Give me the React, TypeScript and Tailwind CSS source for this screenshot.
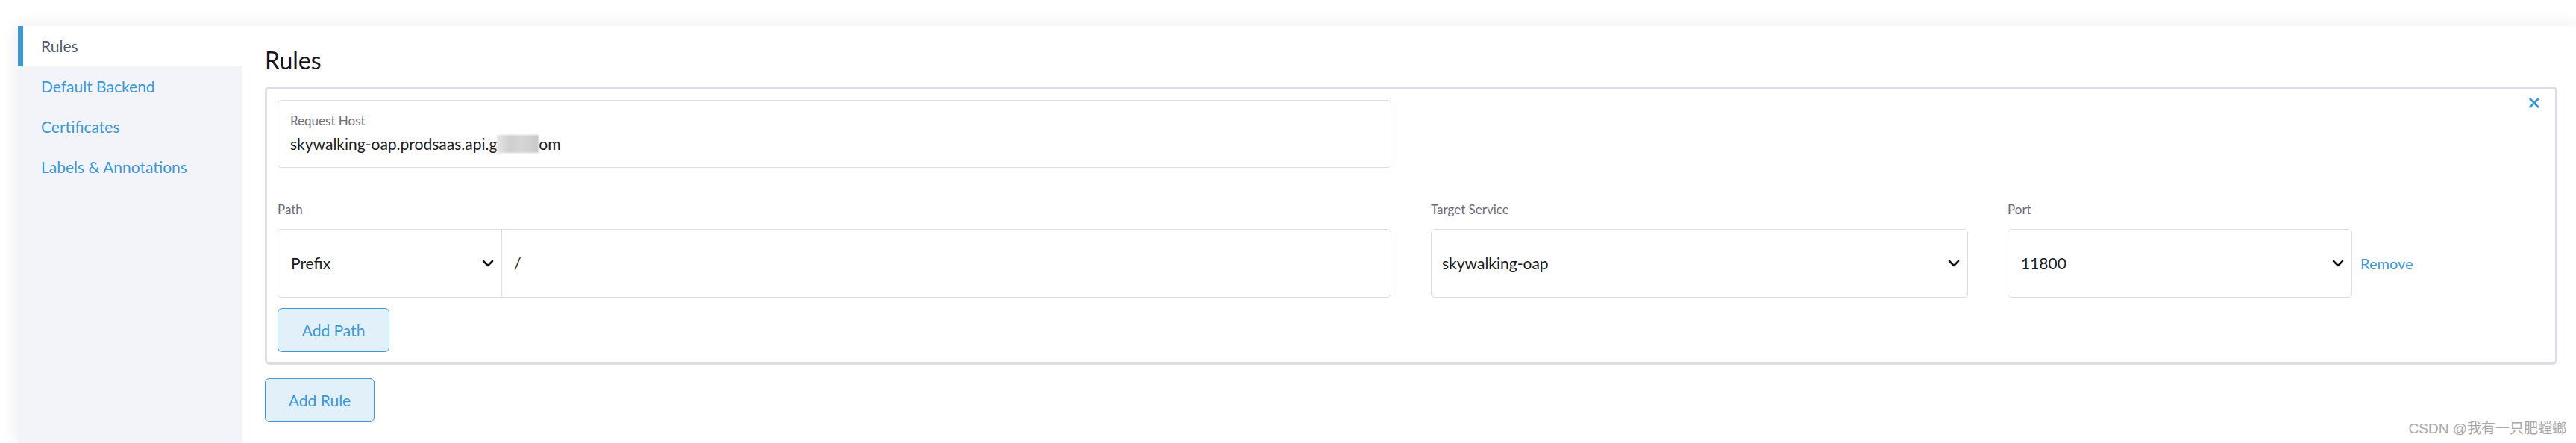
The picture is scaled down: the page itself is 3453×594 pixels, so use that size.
import { X } from "lucide-react";

const Chevron = () => (
  <svg width="16" height="10" viewBox="0 0 16 10" fill="none">
    <polyline points="2,2 8,8 14,2" stroke="#141419" strokeWidth="2.6" strokeLinecap="round" strokeLinejoin="round" />
  </svg>
);

const navItems = ["Default Backend", "Certificates", "Labels & Annotations"];

export default function App() {
  return (
    <div className="relative w-[3453px] h-[594px] overflow-hidden bg-white pt-[35px] pl-[24px] font-['Lato',sans-serif]">
      <div className="flex h-full bg-white shadow-[0_0_22px_rgba(20,20,40,0.09)]">
        {/* side nav */}
        <aside className="w-[300px] shrink-0 bg-[#f3f4f9]">
          <div className="flex h-[54px] items-center border-l-[7px] border-[#3d98d3] bg-white pl-[24px] text-[21px] text-[#555b66]">
            Rules
          </div>
          {navItems.map((item) => (
            <div key={item} className="flex h-[54px] items-center pl-[31px] text-[21px] text-[#3d98d3]">
              {item}
            </div>
          ))}
        </aside>

        {/* content */}
        <main className="flex-1 pl-[31px] pr-[25px] pt-[24px]">
          <h1 className="mb-[13px] h-[44px] text-[32px] leading-[44px] text-[#141419]">Rules</h1>

          <div className="relative rounded-[6px] border-[3px] border-[#dcdee7] px-[14px] pt-[15px] pb-[14px]">
            <button className="absolute right-[17px] top-[8px] text-[#3d98d3]">
              <X size={22} strokeWidth={3} />
            </button>

            <div className="h-[91px] w-[1493px] rounded-[5px] border border-[#dcdee7] px-[16px] pt-[16px]">
              <div className="h-[22px] text-[17px] leading-[22px] text-[#6c6c76]">Request Host</div>
              <div className="mt-[7px] flex h-[26px] items-center text-[21px] leading-[26px] text-[#1b1b1f]">
                <span>skywalking-oap.prodsaas.api.g</span>
                <span className="inline-block h-[24px] w-[56px] bg-[linear-gradient(90deg,#e6e6e6,#cfcfcf_30%,#d6d6d6_60%,#c9c9c9)] blur-[1px]" />
                <span>om</span>
              </div>
            </div>

            <div className="mt-[45px] flex items-start">
              <div className="w-[1493px]">
                <div className="mb-[15px] h-[22px] text-[17px] leading-[22px] text-[#6c6c76]">Path</div>
                <div className="flex h-[92px] rounded-[5px] border border-[#dcdee7]">
                  <div className="flex w-[300px] items-center justify-between border-r border-[#dcdee7] pl-[17px] pr-[10px] text-[21px] text-[#1b1b1f]">
                    <span>Prefix</span>
                    <Chevron />
                  </div>
                  <div className="flex flex-1 items-center pl-[16px] text-[21px] text-[#1b1b1f]">/</div>
                </div>
                <button className="mt-[14px] h-[59px] w-[150px] rounded-[6px] border border-[#3d98d3] bg-[#e2f0f9] text-[21px] text-[#3d98d3]">
                  Add Path
                </button>
              </div>

              <div className="ml-[53px] w-[720px]">
                <div className="mb-[15px] h-[22px] text-[17px] leading-[22px] text-[#6c6c76]">Target Service</div>
                <div className="flex h-[92px] items-center justify-between rounded-[5px] border border-[#dcdee7] pl-[14px] pr-[10px] text-[21px] text-[#1b1b1f]">
                  <span>skywalking-oap</span>
                  <Chevron />
                </div>
              </div>

              <div className="ml-[53px] w-[462px]">
                <div className="mb-[15px] h-[22px] text-[17px] leading-[22px] text-[#6c6c76]">Port</div>
                <div className="flex h-[92px] items-center justify-between rounded-[5px] border border-[#dcdee7] pl-[17px] pr-[10px] text-[21px] text-[#1b1b1f]">
                  <span>11800</span>
                  <Chevron />
                </div>
              </div>

              <div className="ml-[11px] mt-[37px] flex h-[92px] items-center text-[20px] text-[#3d98d3]">Remove</div>
            </div>
          </div>

          <button className="mt-[18px] h-[59px] w-[147px] rounded-[6px] border border-[#3d98d3] bg-[#e2f0f9] text-[21px] text-[#3d98d3]">
            Add Rule
          </button>
        </main>
      </div>

      <div className="absolute bottom-[5px] right-[13px] font-['Liberation_Sans','Noto_Sans_CJK_SC',sans-serif] text-[19px] text-[#a8a8a8]">
        CSDN @我有一只肥螳螂
      </div>
    </div>
  );
}
